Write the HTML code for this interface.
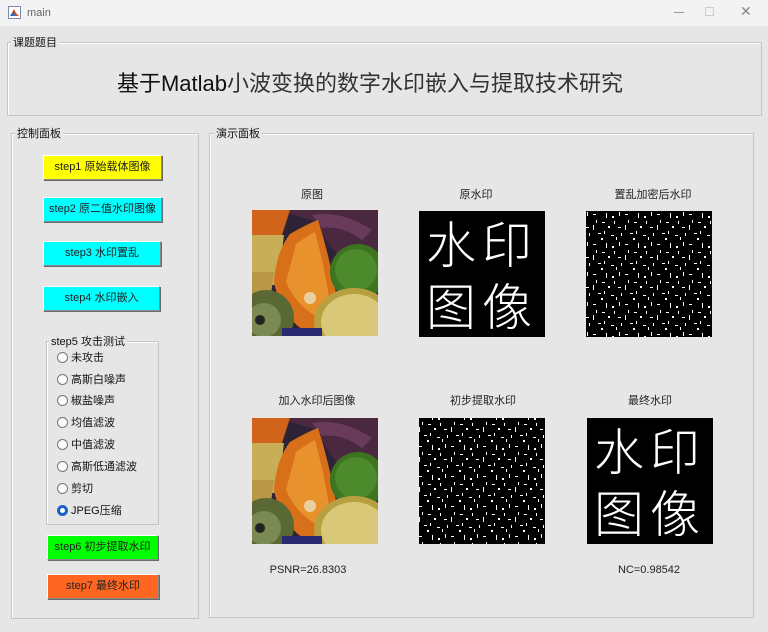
<!DOCTYPE html>
<html><head><meta charset="utf-8">
<style>
*{margin:0;padding:0;box-sizing:border-box}
body{width:768px;height:632px;background:#e6e6e6;font-family:"Liberation Sans","Noto Sans CJK SC",sans-serif;font-size:11px;color:#111;position:relative;overflow:hidden}
.a{position:absolute}
.tb{left:0;top:0;width:768px;height:26px;background:#f3f3f3}
.fs{position:absolute;border:1px solid #c4c4c4;box-shadow:inset 1px 1px 0 #fff}
.lg{position:absolute;background:#e6e6e6;padding:0 2px;font-size:11px;line-height:12px;color:#111}
.btn{position:absolute;border:1px solid #8a8a8a;border-top-color:#fff;border-left-color:#fff;box-shadow:1px 1px 0 #6a6a6a;text-align:center;font-size:11px;color:#222}
.rd{position:absolute;left:57px;font-size:11px;line-height:12px}
.rd i{display:inline-block;width:11px;height:11px;border:1px solid #777;border-radius:50%;background:#fbfbfb;vertical-align:-2px;margin-right:3px}
.lbl{position:absolute;font-size:11px;transform:translateX(-50%);white-space:nowrap;color:#222}
svg{position:absolute}
</style></head><body>
<div class="a tb"></div>
<svg style="left:8px;top:6px" width="13" height="13" viewBox="0 0 13 13"><rect x="0.5" y="0.5" width="12" height="12" fill="#fff" stroke="#7a8ca8"/><path d="M2 10 L6 3 L8 7 L11 10 Z" fill="#d2501a"/><path d="M2 10 L6 5 L7 10Z" fill="#2d6cc0"/></svg>
<div class="a" style="left:27px;top:7px;font-size:11px;color:#666">main</div>
<div class="a" style="left:674px;top:12px;width:10px;height:1px;background:#999"></div>
<div class="a" style="left:705px;top:7px;width:9px;height:9px;border:1px solid #ccc"></div>
<div class="a" style="left:740px;top:3px;font-size:14px;color:#888">✕</div>

<div class="fs" style="left:7px;top:42px;width:755px;height:74px"></div>
<div class="lg" style="left:11px;top:37px">课题题目</div>
<div class="a" style="left:0;width:740px;top:66px;text-align:center;font-size:22px;color:#333;font-family:'Liberation Sans','WenQuanYi Zen Hei',sans-serif"><span style="color:#111">基于Matlab</span>小波变换的数字水印嵌入与提取技术研究</div>

<div class="fs" style="left:11px;top:133px;width:188px;height:486px"></div>
<div class="lg" style="left:15px;top:128px">控制面板</div>
<div class="btn" style="left:43px;top:155px;width:119px;height:25px;background:#ffff00;line-height:23px">step1 原始载体图像</div>
<div class="btn" style="left:43px;top:197px;width:119px;height:25px;background:#00ffff;line-height:23px">step2 原二值水印图像</div>
<div class="btn" style="left:43px;top:241px;width:118px;height:25px;background:#00ffff;line-height:23px">step3 水印置乱</div>
<div class="btn" style="left:43px;top:286px;width:117px;height:25px;background:#00ffff;line-height:23px">step4 水印嵌入</div>
<div class="fs" style="left:46px;top:341px;width:113px;height:184px"></div>
<div class="lg" style="left:49px;top:336px">step5 攻击测试</div>
<div class="rd" style="top:352px"><i></i>未攻击</div>
<div class="rd" style="top:374px"><i></i>高斯白噪声</div>
<div class="rd" style="top:395px"><i></i>椒盐噪声</div>
<div class="rd" style="top:417px"><i></i>均值滤波</div>
<div class="rd" style="top:439px"><i></i>中值滤波</div>
<div class="rd" style="top:461px"><i></i>高斯低通滤波</div>
<div class="rd" style="top:483px"><i></i>剪切</div>
<div class="rd" style="top:505px"><i style="border:3px solid #1a63c5;background:#fff"></i>JPEG压缩</div>
<div class="btn" style="left:47px;top:535px;width:111px;height:25px;background:#00ff00;line-height:23px">step6 初步提取水印</div>
<div class="btn" style="left:47px;top:574px;width:112px;height:25px;background:#ff6622;line-height:23px">step7 最终水印</div>

<div class="fs" style="left:209px;top:133px;width:545px;height:485px"></div>
<div class="lg" style="left:214px;top:128px">演示面板</div>

<div class="lbl" style="left:312px;top:186px">原图</div>
<div class="lbl" style="left:476px;top:186px">原水印</div>
<div class="lbl" style="left:653px;top:186px">置乱加密后水印</div>
<div class="lbl" style="left:317px;top:392px">加入水印后图像</div>
<div class="lbl" style="left:483px;top:392px">初步提取水印</div>
<div class="lbl" style="left:650px;top:392px">最终水印</div>
<div class="lbl" style="left:308px;top:564px">PSNR=26.8303</div>
<div class="lbl" style="left:649px;top:564px">NC=0.98542</div>

<svg width="0" height="0" style="left:0;top:0">
<defs>
<symbol id="fr" viewBox="0 0 126 126">
<rect width="126" height="126" fill="#2e2236"/>
<path d="M25 0 H126 V55 L85 45 L60 10Z" fill="#4a2840"/>
<path d="M60 5 Q90 0 120 20 L110 30 Q90 15 70 18Z" fill="#6a3a5a"/>
<path d="M0 0 H38 L30 25 H0Z" fill="#d0641a"/>
<path d="M0 25 H32 L26 75 H0Z" fill="#c9ae58"/>
<path d="M0 62 H22 L18 92 H0Z" fill="#b89848"/>
<path d="M38 24 Q55 14 66 10 Q82 60 90 122 L62 126 Q30 112 22 72 Q24 42 38 24Z" fill="#d8701a"/>
<path d="M44 34 Q58 24 63 22 Q76 70 80 112 Q48 104 34 72Z" fill="#e8922e"/>
<circle cx="58" cy="88" r="6" fill="#e8d0a0"/>
<circle cx="106" cy="62" r="28" fill="#3c7420"/>
<circle cx="104" cy="60" r="21" fill="#4c8a2c"/>
<circle cx="14" cy="108" r="28" fill="#5a6836"/>
<circle cx="12" cy="110" r="17" fill="#7a8a52"/>
<circle cx="8" cy="110" r="5" fill="#222"/>
<ellipse cx="102" cy="112" rx="40" ry="34" fill="#b8a040"/>
<ellipse cx="102" cy="112" rx="33" ry="28" fill="#d8c878"/>
<rect x="30" y="118" width="40" height="8" fill="#2a2a70"/>
</symbol>
<pattern id="nz" width="32" height="30" patternUnits="userSpaceOnUse">
<rect width="32" height="30" fill="#000"/>
<g fill="#fff">
<rect x="1" y="1" width="1" height="4"/><rect x="7" y="3" width="3" height="1"/><rect x="20" y="2" width="1" height="5"/><rect x="26" y="5" width="2" height="2"/>
<rect x="10" y="9" width="1" height="3"/><rect x="16" y="11" width="3" height="1"/><rect x="28" y="10" width="1" height="3"/>
<rect x="0" y="16" width="3" height="1"/><rect x="7" y="14" width="1" height="5"/><rect x="22" y="15" width="2" height="2"/>
<rect x="3" y="22" width="1" height="3"/><rect x="12" y="22" width="3" height="1"/><rect x="18" y="20" width="1" height="3"/><rect x="25" y="24" width="3" height="1"/>
<rect x="15" y="27" width="2" height="2"/><rect x="30" y="26" width="1" height="3"/>
</g></pattern>
</defs></svg>

<svg style="left:252px;top:210px" width="126" height="126"><use href="#fr"/></svg>
<svg style="left:252px;top:418px" width="126" height="126"><use href="#fr"/></svg>

<svg style="left:419px;top:211px" width="126" height="126"><rect width="126" height="126" fill="#000"/>
<text x="63" y="52" fill="#fff" font-size="50" text-anchor="middle" font-family="'Noto Sans CJK SC',sans-serif" font-weight="300" letter-spacing="6">水印</text>
<text x="63" y="114" fill="#fff" font-size="50" text-anchor="middle" font-family="'Noto Sans CJK SC',sans-serif" font-weight="300" letter-spacing="6">图像</text></svg>
<svg style="left:587px;top:418px" width="126" height="126"><rect width="126" height="126" fill="#000"/>
<text x="63" y="52" fill="#fff" font-size="50" text-anchor="middle" font-family="'Noto Sans CJK SC',sans-serif" font-weight="300" letter-spacing="6">水印</text>
<text x="63" y="114" fill="#fff" font-size="50" text-anchor="middle" font-family="'Noto Sans CJK SC',sans-serif" font-weight="300" letter-spacing="6">图像</text></svg>

<svg style="left:586px;top:211px" width="126" height="126"><rect width="126" height="126" fill="url(#nz)"/></svg>
<svg style="left:419px;top:418px" width="126" height="126"><g transform="translate(-7 -5)"><rect width="140" height="140" fill="url(#nz)"/></g></svg>
</body></html>
